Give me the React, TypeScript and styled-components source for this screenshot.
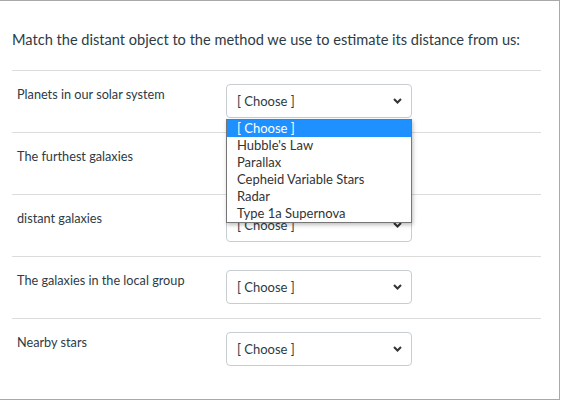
import React from "react";
import styled, { createGlobalStyle } from "styled-components";

const GlobalStyle = createGlobalStyle`
  html, body {
    margin: 0;
    padding: 0;
    background: #ffffff;
  }
  body {
    font-family: Lato, "Open Sans", "Liberation Sans", sans-serif;
  }
`;

const Frame = styled.div`
  box-sizing: border-box;
  width: 560px;
  height: 400px;
  border: 1px solid #a9a9a9;
  border-left: none;
  padding: 0 18px 0 12px;
  background: #fff;
`;

const Title = styled.div`
  color: #2d3b45;
  font-size: 14.6px;
  line-height: 24px;
  white-space: nowrap;
  padding: 27px 0 18px 0;
`;

const Row = styled.div`
  position: relative;
  display: flex;
  align-items: flex-start;
  border-top: 1px solid #dcdcdc;
  padding: 13px 0 14px 5px;
`;

const Label = styled.div`
  width: 209px;
  color: #2d3b45;
  font-size: 12.7px;
  line-height: 20px;
`;

const SelectBox = styled.div`
  box-sizing: border-box;
  width: 186px;
  height: 34px;
  border: 1px solid #c7cdd1;
  border-radius: 4px;
  display: flex;
  align-items: center;
  justify-content: space-between;
  padding: 0 9px 0 10px;
  color: #2d3b45;
  font-size: 13px;
  background: #fff;
`;

const Chevron = styled.svg`
  width: 9px;
  height: 6px;
`;

const Menu = styled.ul`
  position: absolute;
  top: 48px;
  left: 214px;
  z-index: 5;
  box-sizing: border-box;
  width: 186px;
  margin: 0;
  padding: 0;
  list-style: none;
  border: 1px solid #767676;
  background: #fff;
  box-shadow: 1px 2px 4px rgba(0, 0, 0, 0.25);
`;

const MenuItem = styled.li<{ $active?: boolean }>`
  height: 17px;
  line-height: 17px;
  padding-left: 10px;
  font-size: 13px;
  color: ${({ $active }) => ($active ? "#fff" : "#333")};
  background: ${({ $active }) => ($active ? "#1e90ff" : "transparent")};
`;

const items = [
  "Planets in our solar system",
  "The furthest galaxies",
  "distant galaxies",
  "The galaxies in the local group",
  "Nearby stars",
];

const options = [
  "[ Choose ]",
  "Hubble's Law",
  "Parallax",
  "Cepheid Variable Stars",
  "Radar",
  "Type 1a Supernova",
];

const App: React.FC = () => (
  <>
    <GlobalStyle />
    <Frame>
      <Title>Match the distant object to the method we use to estimate its distance from us:</Title>
      {items.map((item, i) => (
        <Row key={item}>
          <Label>{item}</Label>
          <SelectBox>
            <span>[ Choose ]</span>
            <Chevron viewBox="0 0 9 6">
              <path d="M1 1 L4.5 4.5 L8 1" fill="none" stroke="#333" strokeWidth="2" />
            </Chevron>
          </SelectBox>
          {i === 0 && (
            <Menu>
              {options.map((opt, j) => (
                <MenuItem key={opt} $active={j === 0}>
                  {opt}
                </MenuItem>
              ))}
            </Menu>
          )}
        </Row>
      ))}
    </Frame>
  </>
);

export default App;
